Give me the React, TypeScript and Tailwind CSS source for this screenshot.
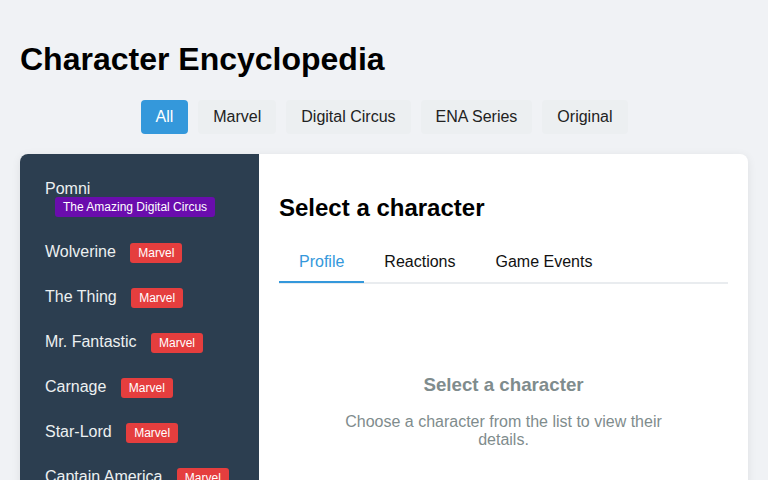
const filters = ['All', 'Marvel', 'Digital Circus', 'ENA Series', 'Original']

interface Character {
  name: string
  series: string
  kind: 'marvel' | 'circus'
}

const characters: Character[] = [
  { name: 'Pomni', series: 'The Amazing Digital Circus', kind: 'circus' },
  { name: 'Wolverine', series: 'Marvel', kind: 'marvel' },
  { name: 'The Thing', series: 'Marvel', kind: 'marvel' },
  { name: 'Mr. Fantastic', series: 'Marvel', kind: 'marvel' },
  { name: 'Carnage', series: 'Marvel', kind: 'marvel' },
  { name: 'Star-Lord', series: 'Marvel', kind: 'marvel' },
  { name: 'Captain America', series: 'Marvel', kind: 'marvel' },
  { name: 'Spider-Man', series: 'Marvel', kind: 'marvel' },
]

const tabs = ['Profile', 'Reactions', 'Game Events']

export default function App() {
  return (
    <div className="h-screen overflow-hidden bg-[#f0f2f5] p-5 font-['Liberation_Sans',Arial,sans-serif] text-black">
      <h1 className="mt-[21px] mb-[22px] text-[32px] leading-[37px] font-bold">Character Encyclopedia</h1>

      <div className="flex justify-center gap-[10px]">
        {filters.map((f, i) => (
          <button
            key={f}
            className={
              i === 0
                ? 'rounded-[4px] bg-[#3498db] px-[15px] py-[8px] text-[16px] leading-[18px] text-white'
                : 'rounded-[4px] bg-[#eceff1] px-[15px] py-[8px] text-[16px] leading-[18px] text-[#222]'
            }
          >
            {f}
          </button>
        ))}
      </div>

      <div className="mt-5 flex rounded-[8px] bg-white shadow-[0_2px_10px_rgba(0,0,0,0.08)]">
        <div className="w-[239px] shrink-0 rounded-l-[8px] bg-[#2c3e50] px-[10px] pt-[13px] pb-[10px]">
          {characters.map((c) => (
            <div
              key={c.name}
              className={
                c.kind === 'circus'
                  ? 'px-[15px] pt-[13px] pb-[13px] text-[16px] leading-[17px] text-[#ecf0f1]'
                  : 'px-[15px] pt-[13px] pb-[12px] text-[16px] leading-[17px] text-[#ecf0f1]'
              }
            >
              {c.name}{' '}
              <span
                className={
                  c.kind === 'circus'
                    ? 'ml-[10px] inline-block rounded-[3px] bg-[#6a0dad] px-[8px] py-[3px] text-[12px] leading-[14px] text-white'
                    : 'ml-[10px] inline-block rounded-[3px] bg-[#e53e3e] px-[8px] py-[3px] text-[12px] leading-[14px] text-white'
                }
              >
                {c.series}
              </span>
            </div>
          ))}
        </div>

        <div className="flex-1 p-5">
          <h2 className="mt-[20px] mb-[21px] text-[24px] leading-[28px] font-bold">Select a character</h2>
          <div className="flex border-b-2 border-[#e9ecef]">
            {tabs.map((t, i) => (
              <div
                key={t}
                className={
                  i === 0
                    ? '-mb-[1px] border-b-2 border-[#3498db] px-5 py-[10px] text-[16px] leading-[18px] text-[#3498db]'
                    : 'px-5 py-[10px] text-[16px] leading-[18px] text-[#111]'
                }
              >
                {t}
              </div>
            ))}
          </div>
          <div className="px-10 pt-[90px] pb-10 text-center text-[#7f8c8d]">
            <h3 className="text-[18.72px] leading-[22px] font-bold">Select a character</h3>
            <p className="mx-auto mt-[17px] max-w-[340px] text-[16px] leading-[18px]">
              Choose a character from the list to view their details.
            </p>
          </div>
        </div>
      </div>
    </div>
  )
}
